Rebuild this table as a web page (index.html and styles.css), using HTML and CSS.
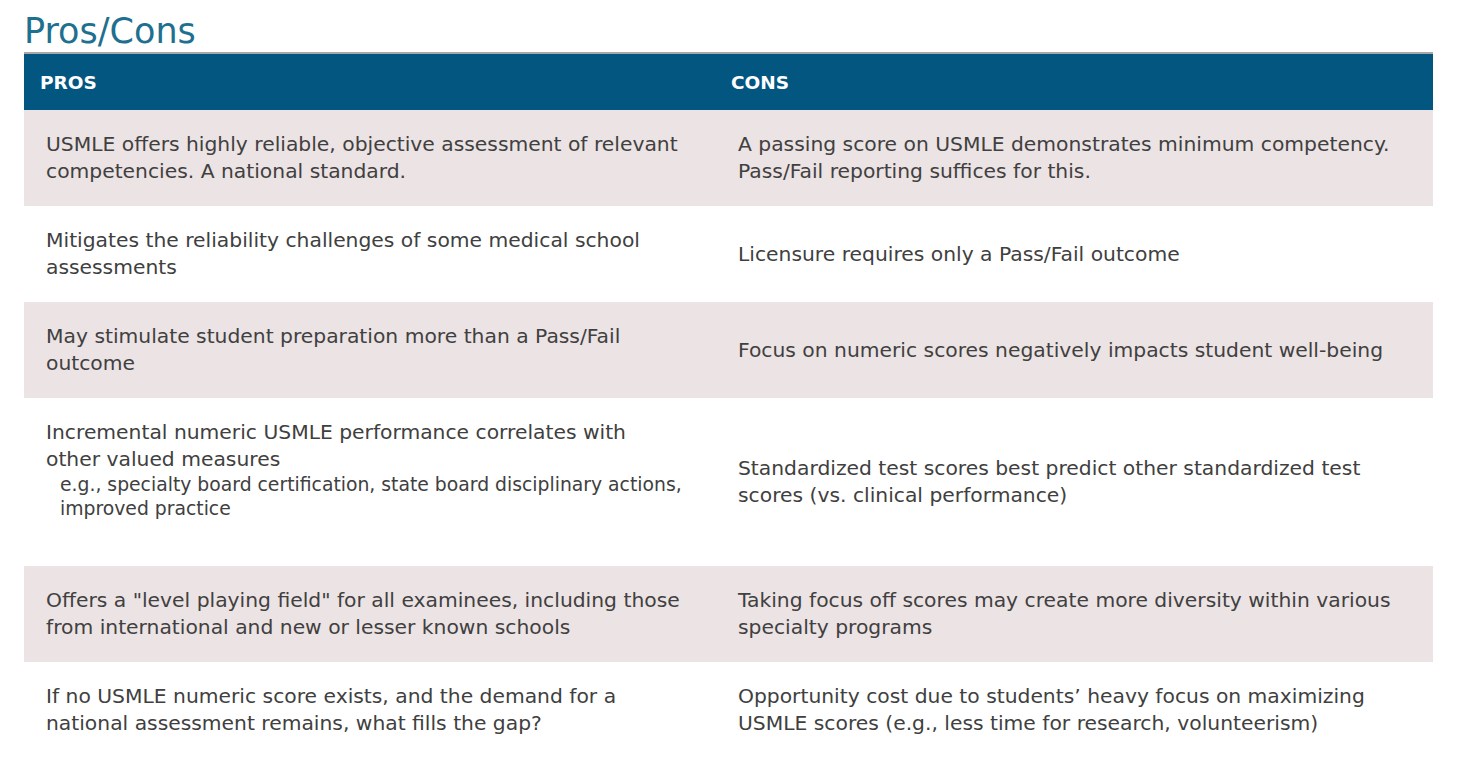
FILE: index.html
```html
<!DOCTYPE html>
<html lang="en">
<head>
<meta charset="utf-8">
<title>Pros/Cons</title>
<link rel="stylesheet" href="styles.css">
</head>
<body>
<div class="page">
  <h1 class="title">Pros/Cons</h1>
  <table class="pc">
    <colgroup><col class="c1"><col class="c2"></colgroup>
    <thead>
      <tr><th class="h1">PROS</th><th class="h2">CONS</th></tr>
    </thead>
    <tbody>
      <tr class="alt">
        <td>USMLE offers highly reliable, objective assessment of relevant<br>competencies. A national standard.</td>
        <td>A passing score on USMLE demonstrates minimum competency.<br>Pass/Fail reporting suffices for this.</td>
      </tr>
      <tr>
        <td>Mitigates the reliability challenges of some medical school<br>assessments</td>
        <td>Licensure requires only a Pass/Fail outcome</td>
      </tr>
      <tr class="alt">
        <td>May stimulate student preparation more than a Pass/Fail<br>outcome</td>
        <td>Focus on numeric scores negatively impacts student well-being</td>
      </tr>
      <tr>
        <td>Incremental numeric USMLE performance correlates with<br>other valued measures
          <div class="sub">e.g., specialty board certification, state board disciplinary actions,<br>improved practice</div>
        </td>
        <td>Standardized test scores best predict other standardized test<br>scores (vs. clinical performance)</td>
      </tr>
      <tr class="alt">
        <td>Offers a "level playing field" for all examinees, including those<br>from international and new or lesser known schools</td>
        <td>Taking focus off scores may create more diversity within various<br>specialty programs</td>
      </tr>
      <tr>
        <td>If no USMLE numeric score exists, and the demand for a<br>national assessment remains, what fills the gap?</td>
        <td>Opportunity cost due to students’ heavy focus on maximizing<br>USMLE scores (e.g., less time for research, volunteerism)</td>
      </tr>
    </tbody>
  </table>
</div>
</body>
</html>
```
FILE: styles.css
```css
html, body {
  margin: 0;
  padding: 0;
  background: #ffffff;
}
body {
  font-family: "DejaVu Sans", "Liberation Sans", sans-serif;
  color: #404040;
}
.page {
  padding: 11px 24px 0 24px;
}
.title {
  margin: 0;
  font-size: 35px;
  line-height: 41px;
  font-weight: normal;
  color: #1f6f8f;
}
.pc {
  width: 1409px;
  border-collapse: collapse;
  border-top: 2px solid #a8a8a8;
  table-layout: fixed;
}
.c1 { width: 692px; }
.c2 { width: 717px; }
.pc thead tr {
  background: #02567f;
}
.pc th {
  height: 56px;
  padding: 0 0 0 16px;
  text-align: left;
  color: #ffffff;
  font-size: 18.5px;
  font-weight: bold;
  vertical-align: middle;
}
.pc th.h2 { padding-left: 15px; }
.pc td {
  padding: 21px 8px 21px 22px;
  font-size: 20.3px;
  line-height: 27px;
  white-space: nowrap;
  vertical-align: middle;
}
.pc tr.alt { background: #ece3e4; }
.sub {
  font-size: 18.8px;
  line-height: 24px;
  padding-left: 14px;
  margin-bottom: 24px;
}
```
